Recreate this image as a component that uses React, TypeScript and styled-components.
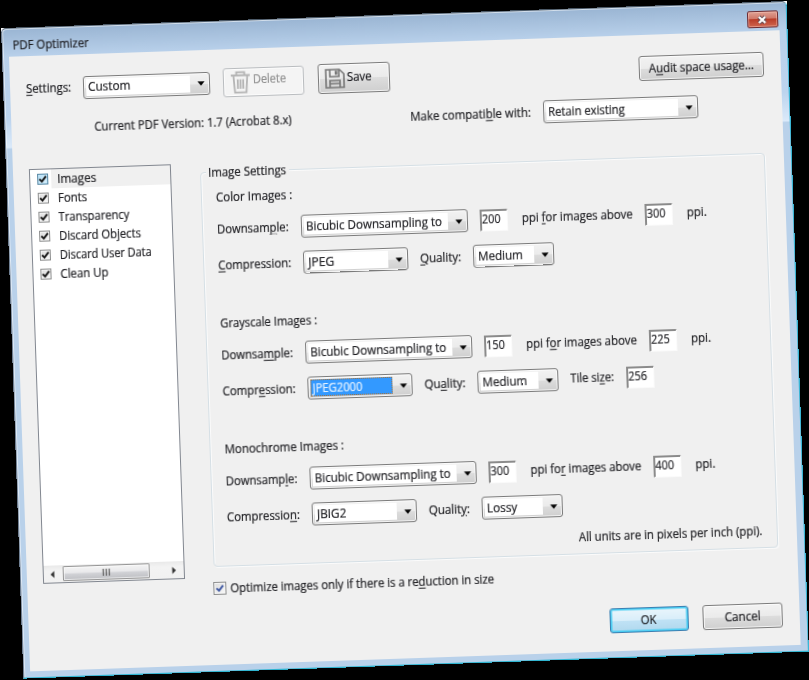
import React, { useLayoutEffect, useRef, useState } from "react";
import styled, { createGlobalStyle, css } from "styled-components";

const GlobalStyle = createGlobalStyle`
  html, body { margin: 0; background: #000; }
  body { width: 809px; height: 680px; overflow: hidden; }
  * { box-sizing: border-box; }
`;

const Stage = styled.div`
  width: 809px;
  height: 680px;
  overflow: hidden;
  background: #000;
  padding: 28px 0 0 1px;
  font-family: "Open Sans", "Noto Sans", sans-serif;
  font-size: 12.6px;
  line-height: 14px;
  color: #1c1c20;
  -webkit-text-stroke: 0.2px currentColor;
`;

const Backing = styled.div`
  width: 785.5px;
  height: 651px;
  transform: rotate(-1.97deg);
  transform-origin: 0 0;
  will-change: transform;
  background: linear-gradient(#fff 0 4px, #000 4px);
`;

const Window = styled.div`
  width: 100%;
  height: 100%;
  display: flex;
  flex-direction: column;
  padding: 0 6.5px 6px 6px;
  border: 1px solid;
  border-color: #4c5a68 #39b5d4 #2fb4d0 #6f7f92;
  border-radius: 5px 5px 0 0;
  background:
    linear-gradient(#9ab5d3 0, #b8d0ea 28px, #bcd4ee 90px, #dbeafa 119px, #b9d1ea 120px, #b9d1ea 100%);
  box-shadow: inset 1px 1px 0 rgba(255, 255, 255, 0.55);
`;

const TitleBar = styled.div`
  display: flex;
  height: 28px;
  flex: none;
  justify-content: space-between;
  padding: 8px 1.5px 0 3.5px;
`;

const TitleText = styled.div`
  padding-top: 1px;
`;

const CloseButton = styled.button`
  display: flex;
  align-items: center;
  justify-content: center;
  width: 31px;
  height: 17px;
  padding: 0;
  border: 1px solid #6b2a31;
  border-radius: 2px;
  background: linear-gradient(#dfa093 0, #cf7566 48%, #b93c28 50%, #cf6650 100%);
  box-shadow: inset 0 0 0 1px rgba(255, 210, 200, 0.45);
`;

const Body = styled.div`
  flex: 1;
  display: flex;
  flex-direction: column;
  background: #f0f0f0;
`;

const Line = styled.div<{ $h: number; $mt?: number; $pl?: number }>`
  display: flex;
  flex: none;
  align-items: center;
  height: ${(p) => p.$h}px;
  margin-top: ${(p) => p.$mt ?? 0}px;
  padding-left: ${(p) => p.$pl ?? 0}px;
`;

const Gap = styled.div<{ $w: number }>`
  flex: none;
  width: ${(p) => p.$w}px;
`;

const TextBox = styled.div<{ $w: number; $up?: number }>`
  flex: none;
  width: ${(p) => p.$w}px;
  height: 16px;
  margin-bottom: ${(p) => p.$up ?? 0}px;
  white-space: nowrap;
  u {
    text-underline-offset: 1.5px;
    text-decoration-thickness: 1px;
  }
`;

const Run = styled.span`
  display: inline-block;
  transform-origin: 0 50%;
`;

/* Text condensed horizontally to an exact width. */
function Text({ w, up, children }: { w: number; up?: number; children: React.ReactNode }) {
  const ref = useRef<HTMLSpanElement>(null);
  const [scale, setScale] = useState(1);
  useLayoutEffect(() => {
    if (ref.current) setScale(w / ref.current.offsetWidth);
  }, [w]);
  return (
    <TextBox $w={w} $up={up}>
      <Run ref={ref} style={{ transform: `translateY(0.8px) scaleX(${scale})` }}>{children}</Run>
    </TextBox>
  );
}

const Button = styled.button<{ $w: number; $h: number; $kind?: "default" | "disabled"; $left?: boolean }>`
  flex: none;
  display: flex;
  align-items: center;
  justify-content: ${(p) => (p.$left ? "flex-start" : "center")};
  gap: 2px;
  width: ${(p) => p.$w}px;
  height: ${(p) => p.$h}px;
  padding: ${(p) => (p.$left ? "0 0 0 6px" : "1px 0 0")};
  font: inherit;
  color: inherit;
  text-align: left;
  border: 1px solid #7b7b7b;
  border-radius: 3px;
  background: linear-gradient(#f2f2f2 0, #ebebeb 50%, #dddddd 51%, #cfcfcf 100%);
  box-shadow: inset 0 0 0 1px rgba(255, 255, 255, 0.75);
  ${(p) => p.$kind === "default" && css`
    border-color: #3c7fb1;
    background: linear-gradient(#eaf5fb 0, #d9eefa 50%, #c0e2f5 51%, #b0d8ee 100%);
    box-shadow: inset 0 0 0 1.5px #48cdf3;
  `}
  ${(p) => p.$kind === "disabled" && css`
    padding-left: 5.5px;
    color: #909090;
    border-color: #b9bcbf;
    background: #f4f4f4;
  `}
`;

const ComboFrame = styled.div<{ $w: number }>`
  flex: none;
  display: flex;
  width: ${(p) => p.$w}px;
  height: 23px;
  padding: 2px;
  border: 1px solid #7b7b7b;
  border-radius: 3px;
  background: linear-gradient(#f2f2f2 0, #ebebeb 50%, #dddddd 51%, #cfcfcf 100%);
  box-shadow: inset 0 0 0 1px rgba(255, 255, 255, 0.75);
`;

const ComboValue = styled.div<{ $active?: boolean }>`
  flex: 1;
  display: flex;
  align-items: center;
  padding-left: 2px;
  background: #fff;
  ${(p) => p.$active && css`
    color: #e8f3ff;
    background: #3399ff;
    outline: 1px dotted #b06a1e;
    outline-offset: -1px;
  `}
`;

const ComboArrow = styled.div`
  width: 17px;
  display: flex;
  align-items: center;
  justify-content: center;
  padding: 1px 0 0 5px;
`;

function Combo({ w, tw, active, children }: { w: number; tw: number; active?: boolean; children: React.ReactNode }) {
  return (
    <ComboFrame $w={w}>
      <ComboValue $active={active}><Text w={tw}>{children}</Text></ComboValue>
      <ComboArrow>
        <svg width="8" height="5" viewBox="0 0 8 5"><path d="M0.4 0.3h7.2L4 4.6z" fill="#000" /></svg>
      </ComboArrow>
    </ComboFrame>
  );
}

const Field = styled.div`
  flex: none;
  width: 28px;
  height: 22px;
  padding: 1px 0 0 1px;
  background: #fff;
  border: 1px solid;
  border-color: #8c8c8c #fafafa #fafafa #8c8c8c;
  box-shadow: inset 1px 1px 0 #8a8a8a;
`;

const Lower = styled.div`
  display: flex;
  flex: none;
  gap: 29px;
  height: 415px;
  margin-top: 28px;
  padding-left: 16.4px;
`;

const ListBox = styled.div`
  width: 141.6px;
  height: 415px;
  display: flex;
  flex-direction: column;
  background: #fff;
  border: 1px solid #828790;
`;

const ListRow = styled.div<{ $on?: boolean }>`
  display: flex;
  align-items: center;
  height: 19px;
  padding-left: 6.5px;
  background: ${(p) => (p.$on ? "linear-gradient(90deg, #fff 21px, #f0f0f0 21px)" : "none")};
`;

const Check = styled.div<{ $size: number; $tone?: "blue" | "soft" }>`
  flex: none;
  display: flex;
  align-items: center;
  justify-content: center;
  width: ${(p) => p.$size}px;
  height: ${(p) => p.$size}px;
  border: 1px solid ${(p) => (p.$tone === "blue" ? "#5586a3" : "#8e8f8f")};
  background: ${(p) => (p.$tone === "blue" ? "linear-gradient(135deg, #b6e0f8, #dcf0fb)" : "linear-gradient(135deg, #dcdcdc, #fafafa)")};
  box-shadow: inset 0 0 0 1px ${(p) => (p.$tone === "blue" ? "#c4e6f8" : "#f4f4f4")};
`;

function Tick({ color = "#111" }: { color?: string }) {
  return (
    <svg width="9" height="9" viewBox="0 0 9 9" fill="none">
      <path d="M1.2 4.3L3.6 6.9L7.8 1.6" stroke={color} strokeWidth="1.9" />
    </svg>
  );
}

const ScrollBar = styled.div`
  display: flex;
  align-items: center;
  height: 17px;
  margin-top: auto;
  padding: 0 7px 0 6px;
  background: linear-gradient(#e9e9e9, #f3f3f3 30%, #f1f1f1);
`;

const Thumb = styled.div`
  display: flex;
  align-items: center;
  justify-content: center;
  width: 87px;
  height: 15px;
  margin: 0 auto 0 8px;
  border: 1px solid #979797;
  border-radius: 1px;
  background: linear-gradient(#f4f4f4 0, #e8e8ea 48%, #d2d3d7 52%, #bfc0c4 100%);
  box-shadow: inset 0 0 0 1px rgba(255, 255, 255, 0.6);
`;

const Group = styled.div`
  width: 565px;
  height: 395px;
  margin-top: 9px;
  border: 1px solid #d5dfe5;
  border-radius: 4px;
  box-shadow: inset 1px 1px 0 #fbfbfb, 1px 1px 0 #fbfbfb;
`;

const Legend = styled.div`
  width: 83px;
  height: 16px;
  margin: -8.5px 0 0 5px;
  padding-left: 2px;
  background: #f0f0f0;
`;

const Section = styled.section`
  display: grid;
  grid-template-rows: 16px 24px 24px;
  row-gap: 12px;
  height: 126px;
  align-content: start;
  padding-left: 14px;
`;

const Sections = styled.div`
  padding-top: 9px;
`;

interface SectionData {
  title: string; titleW: number;
  down: React.ReactNode; comp: React.ReactNode; quality: React.ReactNode; ppi: React.ReactNode;
  from: string; above: string; codec: string; codecW: number; level: string; levelW: number;
  tile?: string;
}

const sections: SectionData[] = [
  {
    title: "Color Images :", titleW: 76,
    down: <>Downsam<u>p</u>le:</>, comp: <><u>C</u>ompression:</>, quality: <><u>Q</u>uality:</>,
    ppi: <>ppi <u>f</u>or images above</>,
    from: "200", above: "300", codec: "JPEG", codecW: 26, level: "Medium", levelW: 45,
  },
  {
    title: "Grayscale Images :", titleW: 97,
    down: <>Downsa<u>m</u>ple:</>, comp: <>Compr<u>e</u>ssion:</>, quality: <>Qu<u>a</u>lity:</>,
    ppi: <>ppi f<u>o</u>r images above</>,
    from: "150", above: "225", codec: "JPEG2000", codecW: 50, level: "Medium", levelW: 45, tile: "256",
  },
  {
    title: "Monochrome Images :", titleW: 119,
    down: <>Downsamp<u>l</u>e:</>, comp: <>Compressio<u>n</u>:</>, quality: <>Qualit<u>y</u>:</>,
    ppi: <>ppi fo<u>r</u> images above</>,
    from: "300", above: "400", codec: "JBIG2", codecW: 29, level: "Lossy", levelW: 30,
  },
];

function ImageSection({ d }: { d: SectionData }) {
  return (
    <Section>
      <Text w={d.titleW}>{d.title}</Text>
      <Line $h={24}>
        <Text w={71.5}>{d.down}</Text><Gap $w={12.3} />
        <Combo w={167} tw={136}>Bicubic Downsampling to</Combo><Gap $w={12.4} />
        <Field><Text w={19}>{d.from}</Text></Field><Gap $w={13.7} />
        <Text w={111} up={1}>{d.ppi}</Text><Gap $w={12.4} />
        <Field><Text w={19}>{d.above}</Text></Field><Gap $w={13.6} />
        <Text w={20} up={1}>ppi.</Text>
      </Line>
      <Line $h={24}>
        <Text w={73}>{d.comp}</Text><Gap $w={11.7} />
        <Combo w={105} tw={d.codecW} active={d.codec === "JPEG2000"}>{d.codec}</Combo><Gap $w={12.1} />
        <Text w={41}>{d.quality}</Text><Gap $w={12.4} />
        <Combo w={80.5} tw={d.levelW}>{d.level}</Combo>
        {d.tile && (
          <>
            <Gap $w={12.6} /><Text w={43.5} up={1}>Tile si<u>z</u>e:</Text><Gap $w={12.6} />
            <Field><Text w={19}>{d.tile}</Text></Field>
          </>
        )}
      </Line>
    </Section>
  );
}

const items: [string, number][] = [
  ["Images", 39], ["Fonts", 29], ["Transparency", 71],
  ["Discard Objects", 82], ["Discard User Data", 92], ["Clean Up", 48],
];

export default function App() {
  return (
    <>
      <GlobalStyle />
      <Stage>
        <Backing>
          <Window>
            <TitleBar>
              <TitleText><Text w={76.5}>PDF Optimizer</Text></TitleText>
              <CloseButton aria-label="Close">
                <svg width="12" height="10" viewBox="0 0 12 10">
                  <path d="M2.8 2L9.2 8M9.2 2L2.8 8" stroke="#5a4048" strokeWidth="4" />
                  <path d="M2.8 2L9.2 8M9.2 2L2.8 8" stroke="#fff" strokeWidth="2.3" />
                </svg>
              </CloseButton>
            </TitleBar>
            <Body>
              <Line $h={30} $mt={18} $pl={16}>
                <Text w={45}><u>S</u>ettings:</Text><Gap $w={12.3} />
                <Combo w={126.5} tw={42}>Custom</Combo><Gap $w={13.4} />
                <Button $w={80.5} $h={29} $kind="disabled" $left>
                  <svg width="21" height="23" viewBox="0 0 21 23" fill="none" stroke="#b4b4b4" strokeWidth="1.8">
                    <path d="M1 4.5h19M6.5 4V1.3h8V4M3.6 5l1.2 16.6h11.4L17.4 5M7.8 8.5v9.5M10.5 8.5v9.5M13.2 8.5v9.5" />
                  </svg>
                  <Text w={33} up={4}>Delete</Text>
                </Button>
                <Gap $w={14.5} />
                <Button $w={71.5} $h={30} $left>
                  <svg width="20" height="20" viewBox="0 0 20 20" fill="none" stroke="#777" strokeWidth="1.6">
                    <path d="M1 1h13.5L19 5.5V19H1zM5 1v7h9V1M5 19v-7h10v7M5 15h10M10.8 3h1v2.4h-1z" />
                  </svg>
                  <Text w={24.5} up={3}>Save</Text>
                </Button>
                <Gap $w={249.5} />
                <Button $w={124.5} $h={25}><Text w={105}>A<u>u</u>dit space usage...</Text></Button>
              </Line>
              <Line $h={23} $mt={14} $pl={83}>
                <Text w={197} up={1}>Current PDF Version: 1.7 (Acrobat 8.x)</Text><Gap $w={119} />
                <Text w={121}>Make compati<u>b</u>le with:</Text><Gap $w={11.8} />
                <Combo w={155.5} tw={77}>Retain existing</Combo>
              </Line>
              <Lower>
                <ListBox>
                  {items.map(([name, w], i) => (
                    <ListRow key={name} $on={i === 0}>
                      <Check $size={11} $tone={i === 0 ? "blue" : undefined}><Tick /></Check>
                      <Gap $w={9} />
                      <Text w={w}>{name}</Text>
                    </ListRow>
                  ))}
                  <ScrollBar>
                    <svg width="5" height="8" viewBox="0 0 5 8"><path d="M4.5 0.5v7L0.7 4z" fill="#333" /></svg>
                    <Thumb>
                      <svg width="9" height="7" viewBox="0 0 9 7"><path d="M1.5 0v7M4.5 0v7M7.5 0v7" stroke="#666" strokeWidth="1.3" /></svg>
                    </Thumb>
                    <svg width="5" height="8" viewBox="0 0 5 8"><path d="M0.5 0.5v7L4.3 4z" fill="#333" /></svg>
                  </ScrollBar>
                </ListBox>
                <Group>
                  <Legend><Text w={78}>Image Settings</Text></Legend>
                  <Sections>
                    {sections.map((d) => <ImageSection key={d.title} d={d} />)}
                  </Sections>
                  <Line $h={16} $mt={-25.5} $pl={365.5}>
                    <Text w={183.5}>All units are in pixels per inch (ppi).</Text>
                  </Line>
                </Group>
              </Lower>
              <Line $h={14} $mt={3.5} $pl={186}>
                <Check $size={13} $tone="soft"><Tick color="#3c55a0" /></Check><Gap $w={3.5} />
                <Text w={264}>Optimize images only if there is a re<u>d</u>uction in size</Text>
              </Line>
              <Line $h={25} $mt={26} $pl={580.5}>
                <Button $w={79.5} $h={25} $kind="default"><Text w={16}>OK</Text></Button>
                <Gap $w={14} />
                <Button $w={79.5} $h={25}><Text w={36}>Cancel</Text></Button>
              </Line>
            </Body>
          </Window>
        </Backing>
      </Stage>
    </>
  );
}
